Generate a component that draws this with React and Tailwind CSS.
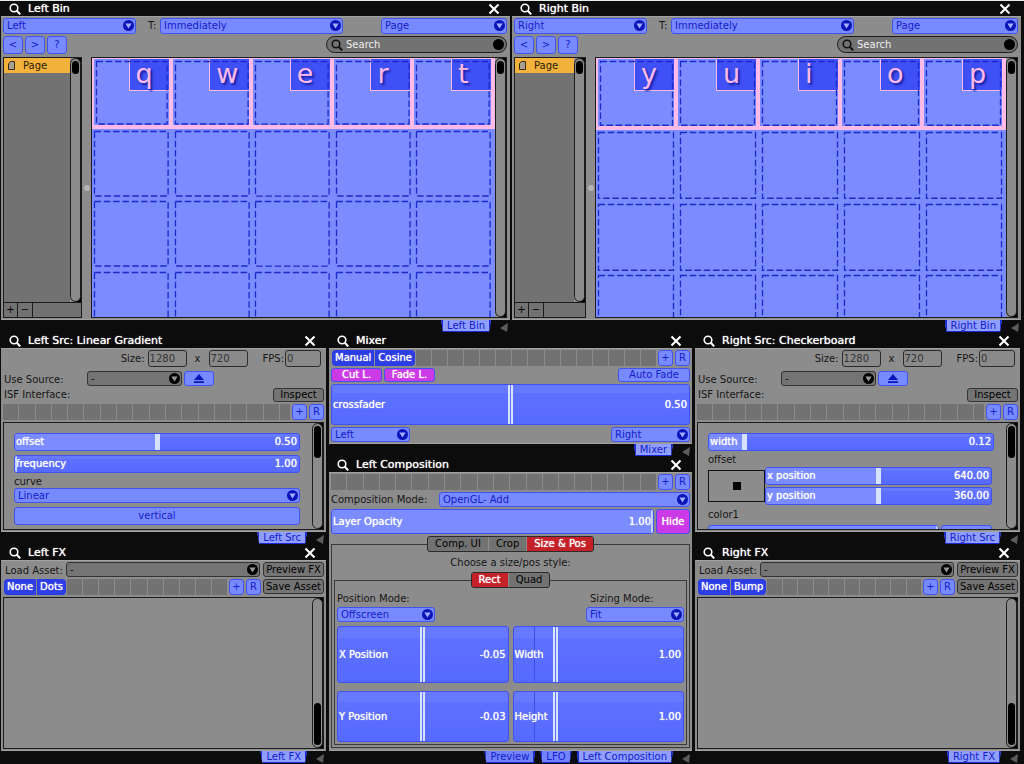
import React, { useId, useState } from "react";
import clsx from "clsx";

const SearchIcon = ({ className }) => (
  <svg className={className} viewBox="0 0 12 12" fill="none" stroke="currentColor">
    <circle cx="5" cy="5" r="3.8" strokeWidth="1.6" />
    <path d="M7.8 7.8L11.2 11.4" strokeWidth="2" />
  </svg>
);

const CloseIcon = () => (
  <svg className="w-3 h-3" viewBox="0 0 12 12" fill="none" stroke="currentColor" strokeWidth="2.1">
    <path d="M1.5 1.5L10.5 10.5M10.5 1.5L1.5 10.5" />
  </svg>
);

const Panel = ({ title, tabs, className, bodyClass, children }) => (
  <section className={clsx("flex flex-col min-w-0", className)}>
    <header className="flex h-[15px] shrink-0 items-center pl-2 pr-[10px] text-white text-[11px] leading-[15px]">
      <SearchIcon className="w-3 h-3" />
      <h2 className="ml-[7px] flex-1 truncate [text-shadow:0_0_1px_#fff]">{title}</h2>
      <button aria-label={"Close " + title}><CloseIcon /></button>
    </header>
    <div className={clsx("flex flex-col bg-[#8c8c8c] border-t border-b border-[#a2a2a2] pl-[2px] overflow-hidden", bodyClass)}>
      {children}
    </div>
    <footer className="flex h-[13px] shrink-0 justify-end items-start pr-[2px] gap-[5px]">
      {tabs.map((tab, i) => (
        <button
          key={tab}
          className={clsx(
            "h-3 px-1 leading-3 text-[#1420c8] [clip-path:polygon(0_0,100%_0,calc(100%-2px)_100%,2px_100%)] border-x-2 border-b border-[#1a28d8]",
            i === tabs.length - 1 ? "bg-[#8f9eff]" : "bg-[#7183ff]"
          )}
        >
          {tab}
        </button>
      ))}
      <svg className="w-2 h-[9px] mt-[3px] ml-1" viewBox="0 0 8 9" fill="#5c5c5c"><path d="M0 5L8 0L7 9Z" /></svg>
    </footer>
  </section>
);

const Select = ({ options, label, dark, className }) => (
  <div className={clsx("relative min-w-0", className)}>
    <select
      aria-label={label}
      className={clsx(
        "block w-full h-full appearance-none rounded-[3px] border pl-[3px] pr-4 leading-3 outline-none",
        dark ? "bg-[#747474] border-[#333] text-[#111]" : "bg-[#788aff] border-[#4253ee] text-[#1420c8]"
      )}
    >
      {options.map((o) => <option key={o}>{o}</option>)}
    </select>
    <svg className="absolute right-[2px] top-[2px] w-[11px] h-[11px] pointer-events-none" viewBox="0 0 11 11">
      <circle cx="5.5" cy="5.5" r="5.5" fill={dark ? "#000" : "#0a14b8"} />
      <path d="M2.4 3.4H8.6L5.5 8.4Z" fill={dark ? "#999" : "#a3b0ff"} />
    </svg>
  </div>
);

const Button = ({ tone = "blue", className, children, ...rest }) => (
  <button
    {...rest}
    className={clsx(
      "flex shrink-0 items-center justify-center rounded-[3px] border leading-3 whitespace-nowrap",
      tone === "blue" && "bg-[#788aff] border-[#4253ee] text-[#1420c8]",
      tone === "gray" && "bg-[#747474] border-[#333] text-black",
      tone === "pink" && "bg-[#cc39e6] border-[#4253ee] text-white [text-shadow:0_0_1px_#fff]",
      className
    )}
  >
    {children}
  </button>
);

const Slider = ({ label, name, value, pos, fill, thumb = "solid", tick, className }) => {
  const id = useId();
  const [at, setAt] = useState(pos);
  return (
    <div className={clsx("relative min-w-0 rounded-[3px] border border-[#4051f0] overflow-hidden bg-linear-to-b from-[#677aff] from-20% via-[#5d70ff] via-20% to-[#566aff]", className)}>
      {fill && <div className="absolute inset-y-0 left-0 bg-[#7a8cff]" style={{ width: at + "%" }} />}
      {tick && <div className="absolute inset-y-0 left-[12%] w-px bg-[#3c4fec]" />}
      <input
        id={id}
        type="range"
        aria-label={name}
        value={at}
        onChange={(e) => setAt(e.target.value)}
        className={clsx(
          "absolute inset-0 w-full h-full appearance-none bg-transparent [&::-webkit-slider-thumb]:appearance-none [&::-webkit-slider-thumb]:h-16 [&::-webkit-slider-thumb]:rounded-none",
          thumb === "solid" && "[&::-webkit-slider-thumb]:w-[5px] [&::-webkit-slider-thumb]:bg-[#d6e2ff]",
          thumb === "thin" && "[&::-webkit-slider-thumb]:w-[2px] [&::-webkit-slider-thumb]:bg-[#c4d2ff]",
          thumb === "double" && "[&::-webkit-slider-thumb]:w-[5px] [&::-webkit-slider-thumb]:border-x-2 [&::-webkit-slider-thumb]:border-[#d6e2ff]"
        )}
      />
      {label && (
        <div className="relative flex h-full items-center justify-between pl-px pr-[2px] leading-3 text-white [text-shadow:0_0_1px_#fff] pointer-events-none">
          <label htmlFor={id}>{label}</label>
          <span>{value}</span>
        </div>
      )}
    </div>
  );
};

// row of preset slots, saved presets come first
const Strip = ({ chips = [], cells, partial }) => (
  <div className="flex flex-1 h-4 gap-px min-w-0">
    {chips.length > 0 && (
      <div className="flex gap-px ml-px rounded-[4px] overflow-hidden">
        {chips.map((c) => <button key={c} className="px-[3px] leading-4 bg-[#2c3de6] text-white [text-shadow:0_0_1px_#fff]">{c}</button>)}
      </div>
    )}
    {Array.from({ length: cells }, (_, i) => <div key={i} className="flex-1 bg-[#727272]" />)}
    {partial && <div className="w-[10px] bg-[#727272]" />}
  </div>
);

const PresetRow = (props) => (
  <div className="flex h-4 flex-1 gap-[2px] min-w-0">
    <Strip {...props} />
    <Button className="w-[15px]">+</Button>
    <Button className="w-[15px]">R</Button>
  </div>
);

const Scrollbar = ({ thumb, bottom }) => (
  <div className="w-[11px] shrink-0 bg-linear-to-r from-[#8c8c8c] from-50% to-black to-50%">
    <div className={clsx("flex flex-col h-full rounded-full border border-[#1c1c1c] bg-[#8c8c8c] px-px py-[2px]", bottom ? "justify-end" : "justify-start")}>
      <div className={clsx("w-full rounded-full bg-black", thumb)} />
    </div>
  </div>
);

const Pad = ({ letter }) => (
  <div className={clsx("relative aspect-[8/7] border-[#ffbbe8]", letter ? "border-t border-r-4 border-b-4 first:border-l-2" : "")}>
    {letter && (
      <div className="absolute right-0 top-0 w-10 h-8 border-l border-b border-[#ffbbe8] bg-[#3e50f6] pl-[6px] text-[27px] leading-[29px] text-[#ffbbe8] [text-shadow:2px_2px_2px_#1a22a0]">
        {letter}
      </div>
    )}
    <div className={clsx("absolute left-[2px] top-[2px]", letter ? "right-[2px] bottom-[1px]" : "right-[5px] bottom-1")}>
      <svg className="block w-full h-full overflow-visible">
        <rect x="0.5" y="0.5" width="100%" height="100%" fill="none" stroke="#1c2ac8" strokeWidth="1.3" strokeDasharray="6.5 2.8" />
      </svg>
    </div>
  </div>
);

const Bin = ({ side, keys, listWidth }) => (
  <Panel title={side + " Bin"} tabs={[side + " Bin"]} bodyClass="h-[304px] pt-px pr-[3px] gap-[2px]">
    <div className="flex h-4 items-center">
      <Select label="Bin" options={[side]} className="w-[133px] h-4" />
      <span className="ml-3 w-3 leading-4">T:</span>
      <Select label="Trigger" options={["Immediately"]} className="w-[183px] h-4" />
      <Select label="View" options={["Page"]} className="ml-auto w-[126px] h-4" />
    </div>
    <div className="flex h-[18px] gap-[2px] mb-px">
      <Button className="w-5">&lt;</Button>
      <Button className="w-5">&gt;</Button>
      <Button className="w-5">?</Button>
      <label className="ml-auto flex w-[181px] h-[17px] items-center rounded-full border border-[#1c1c1c] bg-[#727272] pl-1 pr-[2px]">
        <SearchIcon className="w-3 h-3 shrink-0 text-[#111]" />
        <input placeholder="Search" aria-label="Search" className="flex-1 min-w-0 pl-[3px] leading-3 bg-transparent outline-none placeholder:text-[#eee]" />
        <span className="w-[11px] h-[11px] shrink-0 rounded-full bg-black" />
      </label>
    </div>
    <div className="flex flex-1 min-h-0 pb-px">
      <div className={clsx("flex flex-col shrink-0", listWidth)}>
        <div className="flex flex-1 border border-[#1c1c1c]">
          <div className="flex-1 bg-[#727272]">
            <div className="flex h-[15px] items-center pl-1 bg-[#f3b23c] text-[#2a1c00]">
              <svg className="w-[7px] h-[9px]" viewBox="0 0 7 9"><path d="M2.5 .5H6.5V8.5H.5V2.5Z" fill="#a8a090" stroke="#3a2c10" /></svg>
              <span className="ml-2">Page</span>
            </div>
          </div>
          <Scrollbar thumb="h-[13px]" />
        </div>
        <div className="flex h-[15px] border border-t-0 border-[#1c1c1c] bg-[#727272] text-black">
          <button aria-label="Add page" className="w-[14px] border-r border-[#1c1c1c] leading-3">+</button>
          <button aria-label="Remove page" className="w-[15px] border-r border-[#1c1c1c] leading-3">−</button>
        </div>
      </div>
      <div className="flex w-[9px] shrink-0 items-center justify-center">
        <div className="w-[6px] h-[6px] rounded-full bg-[#b4b4b4]" />
      </div>
      <div className="flex flex-1 min-w-0 border border-[#1c1c1c]">
        <div className="grid flex-1 grid-cols-5 content-start overflow-hidden bg-[#7a8cff]">
          {keys.map((k) => <Pad key={k} letter={k} />)}
          {Array.from({ length: 15 }, (_, i) => <Pad key={i} />)}
        </div>
        <Scrollbar thumb="h-[13px]" />
      </div>
    </div>
  </Panel>
);

const Field = ({ label, value, tight, className }) => (
  <label className="flex items-center">
    <span className={tight ? "mr-px" : "mr-[3px]"}>{label}</span>
    <input defaultValue={value} className={clsx("h-[17px] rounded-[3px] border border-[#2c2c2c] bg-[#8a8a8a] px-px text-[#333] outline-none", className)} />
  </label>
);

const Source = ({ side, name, children }) => (
  <Panel title={side + " Src: " + name} tabs={[side + " Src"]} bodyClass="h-[184px] pt-px pr-[2px]">
    <div className="flex h-[17px] items-center justify-end pr-[3px]">
      <Field label="Size:" value="1280" className="w-[39px]" />
      <Field label={<span className="ml-2 mr-[5px]">x</span>} value="720" className="w-[39px]" />
      <div className="ml-[15px]"><Field tight label="FPS:" value="0" className="w-9" /></div>
    </div>
    <div className="flex h-[15px] mt-1 gap-[2px]">
      <span className="w-[82px] pl-px leading-[17px]">Use Source:</span>
      <Select dark label="Use Source" options={["-"]} className="w-[95px]" />
      <Button aria-label="Eject" className="w-[30px]">
        <svg className="w-[10px] h-[9px]" viewBox="0 0 10 9" fill="#0a14b8"><path d="M0 6L5 0L10 6ZM0 7.2H10V9H0Z" /></svg>
      </Button>
    </div>
    <div className="flex h-[14px] mt-[2px] items-center justify-between pl-px">
      <span>ISF Interface:</span>
      <Button tone="gray" className="w-[51px] h-[14px]">Inspect</Button>
    </div>
    <div className="flex mt-[2px]"><PresetRow cells={17} partial /></div>
    <div className="flex flex-1 min-h-0 mt-[2px] mb-px border border-[#1c1c1c]">
      <div className="flex-1 min-w-0 overflow-hidden pt-[10px] pl-[10px] pr-3">{children}</div>
      <Scrollbar thumb="h-8" />
    </div>
  </Panel>
);

const Effects = ({ side, effect }) => (
  <Panel title={side + " FX"} tabs={[side + " FX"]} className="flex-1" bodyClass="flex-1 pt-px pr-[2px]">
    <div className="flex h-[15px] gap-[3px]">
      <span className="w-[60px] pl-[2px] leading-[18px]">Load Asset:</span>
      <Select dark label="Load Asset" options={["-"]} className="flex-1" />
      <Button tone="gray" className="w-[61px]">Preview FX</Button>
    </div>
    <div className="flex h-4 mt-[2px] gap-[2px]">
      <PresetRow chips={["None", effect]} cells={10} />
      <Button tone="gray" className="w-[61px] h-[15px]">Save Asset</Button>
    </div>
    <div className="flex flex-1 justify-end mt-[2px] mb-px border border-[#1c1c1c]">
      <Scrollbar bottom thumb="h-[42px]" />
    </div>
  </Panel>
);

const Tabs = ({ items, active }) => (
  <div className="relative flex mx-auto h-4 rounded-[3px] border border-[#2c2c2c] overflow-hidden bg-[#727272] text-black">
    {items.map((t) => (
      <button key={t} className={clsx("px-[7px] leading-[14px] border-r last:border-r-0 border-[#8c8c8c]", t === active && "bg-[#c42228] text-white [text-shadow:0_0_1px_#fff]")}>{t}</button>
    ))}
  </div>
);

const Mixer = () => (
  <Panel title="Mixer" tabs={["Mixer"]} bodyClass="h-24 pt-px pr-[2px] gap-[2px]">
    <div className="flex"><PresetRow chips={["Manual", "Cosine"]} cells={15} /></div>
    <div className="flex h-[14px] gap-[2px]">
      <Button tone="pink" className="w-[51px]">Cut L.</Button>
      <Button tone="pink" className="w-[51px]">Fade L.</Button>
      <Button className="ml-auto w-[72px]">Auto Fade</Button>
    </div>
    <Slider label="crossfader" value="0.50" pos={50} thumb="double" className="h-[41px]" />
    <div className="flex h-[15px] justify-between">
      <Select label="Left source" options={["Left"]} className="w-[79px]" />
      <Select label="Right source" options={["Right"]} className="w-[79px]" />
    </div>
  </Panel>
);

const Composition = () => (
  <Panel title="Left Composition" tabs={["Preview", "LFO", "Left Composition"]} className="flex-1" bodyClass="flex-1 pt-px pr-[2px]">
    <div className="flex"><PresetRow cells={20} /></div>
    <div className="flex h-[15px] mt-[2px]">
      <span className="w-[108px] leading-[15px]">Composition Mode:</span>
      <Select label="Composition Mode" options={["OpenGL- Add"]} className="flex-1" />
    </div>
    <div className="flex h-[25px] mt-[2px] gap-[2px]">
      <Slider fill label="Layer Opacity" value="1.00" pos={100} thumb="thin" className="flex-1" />
      <Button tone="pink" className="w-[34px]">Hide</Button>
    </div>
    <div className="flex flex-col flex-1 mt-[2px] mb-[2px]">
      <div className="relative z-10 flex"><Tabs items={["Comp. UI", "Crop", "Size & Pos"]} active="Size & Pos" /></div>
      <div className="flex flex-col flex-1 -mt-2 border border-[#3a3a3a] px-[2px] pb-[2px] pt-3">
        <p className="text-center leading-3 mb-[3px]">Choose a size/pos style:</p>
        <div className="relative z-10 flex"><Tabs items={["Rect", "Quad"]} active="Rect" /></div>
        <div className="flex flex-col flex-1 -mt-2 border border-[#3a3a3a] px-[2px] pb-[2px] pt-[10px]">
          <div className="flex justify-between leading-4">
            <span>Position Mode:</span>
            <span className="w-[94px]">Sizing Mode:</span>
          </div>
          <div className="flex justify-between h-[15px]">
            <Select label="Position Mode" options={["Offscreen"]} className="w-[98px]" />
            <Select label="Sizing Mode" options={["Fit"]} className="w-[98px]" />
          </div>
          <div className="grid grid-cols-2 grid-rows-[58fr_51fr] flex-1 gap-x-1 gap-y-2 mt-1">
            <Slider label="X Position" value="-0.05" pos={50} thumb="double" />
            <Slider label="Width" value="1.00" pos={24} thumb="double" tick />
            <Slider label="Y Position" value="-0.03" pos={50} thumb="double" />
            <Slider label="Height" value="1.00" pos={24} thumb="double" tick />
          </div>
        </div>
      </div>
    </div>
  </Panel>
);

const App = () => (
  <div className="flex flex-col min-h-screen border-t border-[#e4eeec] bg-[#0c0c0c] font-['DejaVu_Sans',sans-serif] text-[10px] leading-3 text-[#161616] pl-px pr-[3px]">
    <div className="grid grid-cols-2 gap-[2px]">
      <Bin side="Left" keys={["q", "w", "e", "r", "t"]} listWidth="w-[79px]" />
      <Bin side="Right" keys={["y", "u", "i", "o", "p"]} listWidth="w-[72px]" />
    </div>
    <div className="grid flex-1 grid-cols-[325fr_363fr_325fr] gap-[3px] pr-px">
      <div className="flex flex-col min-w-0">
        <Source side="Left" name="Linear Gradient">
          <Slider fill label="offset" value="0.50" pos={50} className="h-[18px]" />
          <Slider label="frequency" value="1.00" pos={0} thumb="thin" className="h-[18px] mt-1" />
          <p className="leading-3 mt-[3px]">curve</p>
          <Select label="curve" options={["Linear"]} className="h-[15px]" />
          <Button className="w-full h-[18px] mt-1">vertical</Button>
        </Source>
        <Effects side="Left" effect="Dots" />
      </div>
      <div className="flex flex-col min-w-0">
        <Mixer />
        <Composition />
      </div>
      <div className="flex flex-col min-w-0">
        <Source side="Right" name="Checkerboard">
          <Slider fill label="width" value="0.12" pos={12} className="h-[18px]" />
          <p className="leading-3 mt-[3px]">offset</p>
          <div className="flex mt-px pr-[2px]">
            <div className="flex w-[57px] h-8 mt-[3px] shrink-0 items-center justify-center border border-[#111]">
              <div className="w-2 h-2 bg-black" />
            </div>
            <div className="flex flex-col flex-1 gap-[2px]">
              <Slider fill label="x position" value="640.00" pos={50} className="h-[18px]" />
              <Slider fill label="y position" value="360.00" pos={50} className="h-[18px]" />
            </div>
          </div>
          <p className="leading-3 mt-1">color1</p>
          <div className="flex mt-1 gap-[2px] pr-[2px]">
            <Slider fill name="color1 red" pos={100} thumb="thin" className="flex-1 h-[18px]" />
            <Button aria-label="color1" className="w-[51px] h-[18px]" />
          </div>
        </Source>
        <Effects side="Right" effect="Bump" />
      </div>
    </div>
  </div>
);

export default App;
